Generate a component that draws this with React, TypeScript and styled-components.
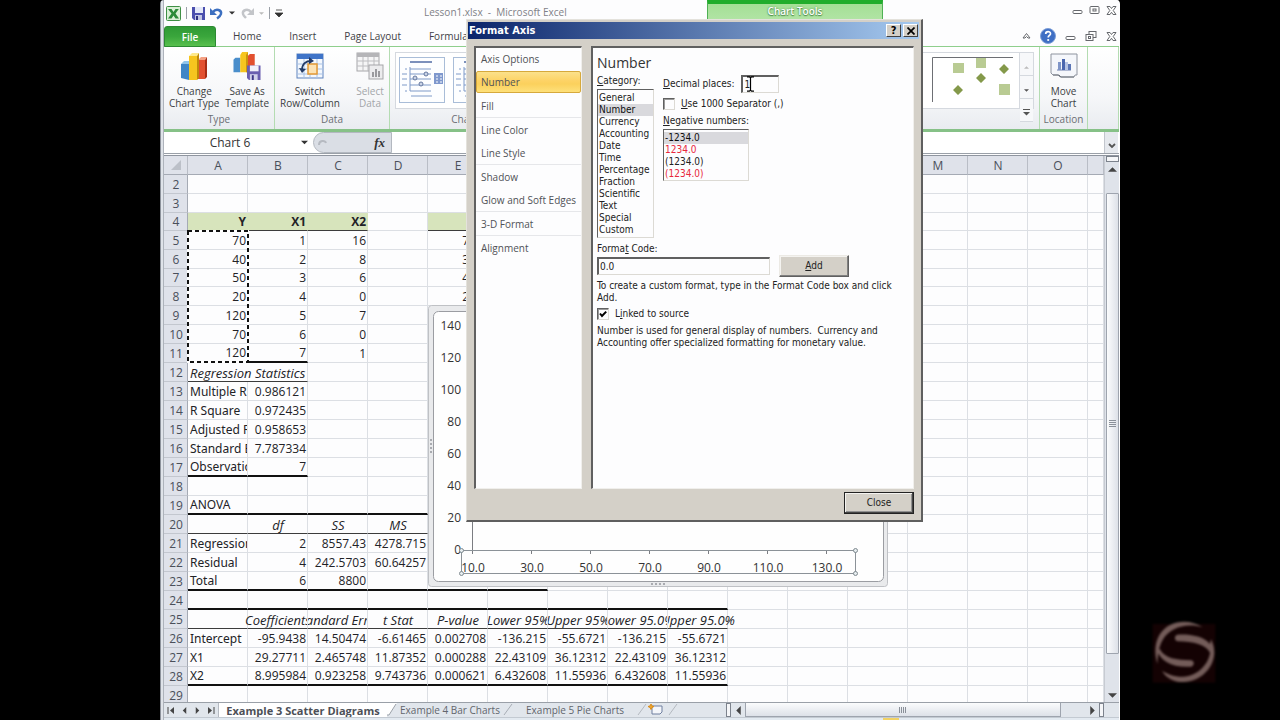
import React from 'react';
import styled, { createGlobalStyle, css } from 'styled-components';

const uiFont = '"Open Sans", "Noto Sans", sans-serif';
const dialogFont = '"DejaVu Sans Condensed", "DejaVu Sans", sans-serif';

const GlobalStyle = createGlobalStyle`
  *, *::before, *::after { box-sizing: border-box; }
  body { margin: 0; background: #000; font-family: ${uiFont}; overflow: hidden; }
  button, input, select { font: inherit; color: inherit; margin: 0; }
`;

/* ---------- window frame ---------- */

const Stage = styled.div`
  position: relative;
  display: flex;
  justify-content: center;
  height: 100vh;
  background: #000;
`;

const ExcelWindow = styled.div`
  position: relative;
  display: flex;
  flex-direction: column;
  width: 75vw;
  height: 100%;
  padding: 0 1px 0 4px;
  background: linear-gradient(90deg, #8d929b 0 1px, #dfe3e9 1px 3px, #aeb3bb 3px 4px, #fdfdfe 4px);
  border-radius: 4px 4px 0 0;
  overflow: hidden;
`;

const TitleBar = styled.header`
  display: flex;
  height: 26px;
  flex: none;
  background: #fdfdfe;
`;

const QuickAccess = styled.div`
  display: flex;
  align-items: center;
  gap: 5px;
  width: 260px;
  padding-left: 2px;
`;

const IconButton = styled.button`
  display: flex;
  align-items: center;
  justify-content: center;
  padding: 0;
  border: 0;
  background: none;
`;

const BarDivider = styled.span`
  width: 1px;
  height: 12px;
  background: #9a9fa7;
`;

const WindowTitle = styled.div`
  width: 283px;
  font-size: 10px;
  line-height: 25px;
  color: #7f8187;
  white-space: nowrap;
`;

const ContextTab = styled.div`
  width: 176px;
  height: 26px;
  border-top: 4px solid #21ad2c;
  border-left: 1px solid #4fb054;
  border-right: 1px solid #4fb054;
  background: linear-gradient(#a4df96, #b6e6aa);
  color: #fff;
  font-size: 10px;
  font-weight: 600;
  line-height: 15px;
  text-align: center;
  text-shadow: 0 1px 1px #4d8a4b, 0 0 2px #4d8a4b;
`;

const ControlRow = styled.div<{ $gap: number }>`
  display: flex;
  align-items: center;
  gap: ${p => p.$gap}px;
  height: 20px;
  margin-left: auto;
  padding-right: 2px;
`;

const RibbonTabs = styled.nav`
  display: flex;
  flex: none;
  height: 21px;
  background: #fdfdfe;
  border-bottom: 1px solid #8fcf8d;
`;

const FileTab = styled.a`
  width: 52px;
  height: 21px;
  margin-right: 3px;
  border: 1px solid #2c8a32;
  border-radius: 3px 3px 0 0;
  background: linear-gradient(#2f9a35, #3aa63c 50%, #58c04e);
  color: #fff;
  font-size: 10px;
  font-weight: 600;
  line-height: 20px;
  text-align: center;
  text-decoration: none;
`;

const RibbonTab = styled.button`
  padding: 0 14px;
  border: 0;
  background: none;
  color: #3f4146;
  font-size: 10px;
  line-height: 21px;
  white-space: nowrap;
`;

const Ribbon = styled.section`
  display: flex;
  flex: none;
  height: 85px;
  background: linear-gradient(#ffffff, #f6f7f9 60%, #e9ecf0);
  border-bottom: 3px solid #86c187;
`;

const Group = styled.div<{ $width?: number }>`
  display: flex;
  flex-direction: column;
  flex: ${p => (p.$width ? 'none' : '1')};
  width: ${p => (p.$width ? p.$width + 'px' : 'auto')};
  min-width: 0;
  border-right: 1px solid #b4dcb2;
`;

const GroupBody = styled.div<{ $align?: string }>`
  display: flex;
  flex: 1;
  gap: 3px;
  padding: 5px 5px 0;
  justify-content: ${p => p.$align || 'space-between'};
`;

const GroupLabel = styled.div`
  height: 18px;
  font-size: 10px;
  line-height: 17px;
  text-align: center;
  color: #6b6e74;
`;

const BigButton = styled.button<{ $disabled?: boolean }>`
  display: flex;
  flex-direction: column;
  align-items: center;
  gap: 5px;
  padding: 0;
  border: 0;
  background: none;
  font-size: 10px;
  line-height: 12px;
  white-space: nowrap;
  color: ${p => (p.$disabled ? '#a3a5a9' : '#3b3d42')};
  span { display: block; }
`;

const Gallery = styled.div`
  display: flex;
  height: 57px;
  padding: 4px 3px;
  gap: 8px;
  border: 1px solid #d5d9df;
  background: #fff;
`;

const GalleryScroll = styled.div`
  display: flex;
  flex-direction: column;
  width: 14px;
  margin: -4px -3px;
  border-left: 1px solid #d5d9df;
  button { flex: 1; border: 0; border-bottom: 1px solid #d5d9df; background: #f7f8fa; padding: 0; }
`;

/* ---------- formula bar ---------- */

const FormulaBar = styled.div`
  display: flex;
  flex: none;
  height: 22px;
  background: #fff;
  border-bottom: 1px solid #9aa0a8;
`;

const NameBox = styled.input`
  width: 132px;
  border: 0;
  padding: 0;
  background: none;
  text-align: center;
  font-size: 12px;
  line-height: 18px;
  color: #333;
`;

const NameList = styled(IconButton)`
  width: 17px;
`;

const FxPill = styled.div`
  display: flex;
  align-items: center;
  justify-content: space-between;
  width: 79px;
  padding: 0 6px 0 4px;
  border: 1px solid #b3b8c0;
  border-radius: 11px 0 0 11px;
  background: #dadee5;
  font: italic bold 13px "Liberation Serif", serif;
  color: #333;
`;

const FormulaInput = styled.input`
  flex: 1;
  min-width: 0;
  border: 0;
  background: none;
`;

const Expand = styled.button`
  width: 14px;
  margin-right: 1px;
  padding: 0;
  border: 0;
  border-left: 1px solid #c2c6cd;
  background: #e6e9ee;
`;

/* ---------- sheet ---------- */

const SheetArea = styled.main`
  display: flex;
  flex: 1;
  min-height: 0;
  margin-top: 1px;
  border-top: 1px solid #8f959f;
`;

const Sheet = styled.div`
  position: relative;
  flex: 1;
  min-width: 0;
  overflow: hidden;
  background: #fdfdfe;
`;

const Grid = styled.table`
  width: 100%;
  table-layout: fixed;
  border-collapse: separate;
  border-spacing: 0;
  font-size: 12px;
  line-height: 16px;
  color: #222226;
  td { padding: 0; white-space: nowrap; }
  th { padding: 1px 0 0 1px; white-space: nowrap; }
`;

const Col = styled.col<{ $w?: number }>`
  width: ${p => (p.$w ? p.$w + 'px' : 'auto')};
`;

const ColHead = styled.th`
  height: 19px;
  border-right: 1px solid #b9bdc6;
  border-bottom: 1px solid #a5aab4;
  background: #dfe2ea;
  color: #4a4f5a;
  font-weight: 400;
`;

const Row = styled.tr<{ $short?: boolean }>`
  height: ${p => (p.$short ? '18px' : '19px')};
`;

const RowHead = styled.th`
  border-right: 1px solid #a5aab4;
  border-bottom: 1px solid #c3c7cf;
  background: #dfe2ea;
  color: #4a4f5a;
  font-weight: 400;
`;

type Line = 'thin' | 'thick' | undefined;
type Kind = 'text' | 'num' | 'bold' | 'head' | 'title';

const Cell = styled.td<{ $green?: boolean; $line?: Line }>`
  height: inherit;
  border-right: 1px solid ${p => (p.$green ? '#d7e4bc' : '#dcdfe4')};
  border-bottom: 1px solid #dcdfe4;
  background: ${p => (p.$green ? '#d7e4bc' : 'transparent')};
  ${p => p.$line === 'thin' && css`border-bottom: 1px solid #3c3c3c;`}
  ${p => p.$line === 'thick' && css`border-bottom: 2px solid #111;`}
`;

const justify: Record<Kind, string> = {
  text: 'flex-start', title: 'flex-start', num: 'flex-end', bold: 'flex-end', head: 'center',
};

const Value = styled.div<{ $kind: Kind; $spill?: 'left' | 'right' }>`
  display: flex;
  height: 17px;
  padding: 1px 1px 0 2px;
  justify-content: ${p => justify[p.$kind]};
  font-size: ${p => (p.$kind === 'head' || p.$kind === 'title' ? '13px' : '12px')};
  font-weight: ${p => (p.$kind === 'bold' ? 700 : 400)};
  font-style: ${p => (p.$kind === 'head' || p.$kind === 'title' ? 'italic' : 'normal')};
  font-family: ${p => (p.$kind === 'text' ? '"Noto Sans", sans-serif' : 'inherit')};
  overflow: ${p => (p.$spill ? 'visible' : 'hidden')};
  ${p => p.$spill === 'left' && css`clip-path: inset(0 0 0 -30px);`}
  ${p => p.$spill === 'right' && css`clip-path: inset(0 -30px 0 0);`}
`;

const Marquee = styled.svg`
  position: absolute;
  left: 23px;
  top: 74px;
`;

const ChartFrame = styled.svg`
  position: absolute;
  left: 264px;
  top: 149px;
  font-family: ${uiFont};
  font-size: 12px;
`;

const VScroll = styled.div`
  display: flex;
  flex-direction: column;
  align-items: center;
  width: 15px;
  background: #dfe3ea;
  border-left: 1px solid #c7cbd2;
`;

const SplitBox = styled.div`
  width: 13px;
  height: 6px;
  border: 1px solid #7c828c;
  background: #f5f6f8;
`;

const VTrack = styled.div`
  display: flex;
  flex: 1;
  padding: 17px 0 34px;
`;

const VThumb = styled.div`
  display: flex;
  align-items: center;
  justify-content: center;
  width: 13px;
  border: 1px solid #9ea4ae;
  border-radius: 1px;
  background: linear-gradient(90deg, #fbfcfd, #dde1e8);
`;

const ScrollButton = styled.button`
  display: flex;
  align-items: center;
  justify-content: center;
  width: 14px;
  height: 14px;
  padding: 0;
  border: 0;
  background: none;
`;

/* ---------- bottom bar ---------- */

const BottomBar = styled.footer`
  display: flex;
  flex: none;
  height: 15px;
  background: #e1e6ec;
  border-top: 1px solid #9aa0a8;
`;

const SheetNav = styled.div`
  display: flex;
  align-items: center;
  justify-content: space-around;
  width: 55px;
  border-right: 1px solid #b5bac2;
`;

const SheetTab = styled.button<{ $active?: boolean; $w: number }>`
  width: ${p => p.$w}px;
  padding: 0;
  border: 0;
  background: ${p => (p.$active ? '#fff' : 'none')};
  color: ${p => (p.$active ? '#4c4f57' : '#62656d')};
  font-size: ${p => (p.$active ? '11px' : '10px')};
  font-weight: ${p => (p.$active ? 700 : 400)};
  line-height: 13px;
  white-space: nowrap;
`;

const HScroll = styled.div`
  display: flex;
  flex: 1;
  margin-left: 29px;
  padding-right: 15px;
`;

const HTrack = styled.div`
  display: flex;
  flex: 1;
  padding-right: 24px;
`;

const HThumb = styled.div`
  display: flex;
  align-items: center;
  justify-content: center;
  flex: 1;
  border: 1px solid #9ea4ae;
  border-top: 0;
  background: linear-gradient(#fbfcfd, #dde1e8);
`;

const SplitHandle = styled.div`
  width: 5px;
  border: 1px solid #7c828c;
  background: #f5f6f8;
`;

const StatusBar = styled.div`
  display: flex;
  flex: none;
  justify-content: flex-end;
  height: 3px;
  padding-right: 220px;
  background: #e3eaf1;
  border-top: 1px solid #c3cad2;
  span { width: 16px; background: #f2d264; }
`;

/* ---------- dialog ---------- */

const Dialog = styled.section`
  position: absolute;
  left: 306px;
  top: 19px;
  display: flex;
  flex-direction: column;
  width: 457px;
  height: 503px;
  padding: 2px 2px 0 1px;
  background: #d4d0c8;
  border: 1px solid #e4e2dc;
  border-right: 2px solid #5f5f5f;
  border-bottom: 2px solid #5f5f5f;
  font-family: ${dialogFont};
  font-size: 10px;
  line-height: 12px;
  color: #222;
`;

const DialogTitle = styled.div`
  display: flex;
  align-items: center;
  gap: 2px;
  height: 17px;
  padding: 0 1px;
  background: linear-gradient(90deg, #0a246a, #a6caf0);
  color: #fff;
  font-size: 11px;
  font-weight: 700;
  h1 { flex: 1; margin: 0; font: inherit; }
`;

const CaptionButton = styled.button`
  display: flex;
  align-items: center;
  justify-content: center;
  width: 15px;
  height: 13px;
  padding: 0;
  background: #d4d0c8;
  border: 1px solid;
  border-color: #fff #404040 #404040 #fff;
  color: #000;
  font-size: 11px;
  font-weight: 700;
  line-height: 11px;
`;

const DialogBody = styled.div`
  display: flex;
  gap: 9px;
  height: 443px;
  margin: 7px 5px 0 6px;
`;

const sunken = css`
  border: 1px solid;
  border-color: #606060 #dcdad4 #dcdad4 #606060;
  background: #fdfdfe;
`;

const panel = css`
  border: 1px solid;
  border-width: 2px 1px 1px 2px;
  border-color: #606060 #f0efec #f0efec #606060;
  background: #fdfdfe;
`;

const Nav = styled.nav`
  ${panel}
  flex: none;
  width: 108px;
  font-family: ${uiFont};
`;

const NavItem = styled.a<{ $active?: boolean; $rule?: boolean }>`
  display: block;
  padding-left: ${p => (p.$active ? '4px' : '5px')};
  font-size: 10px;
  line-height: ${p => (p.$active ? '20px' : '22px')};
  margin-bottom: 1px;
  color: #505257;
  text-decoration: none;
  white-space: nowrap;
  ${p => p.$rule && css`border-bottom: 1px solid #e6e7ea;`}
  ${p => p.$active && css`
    border: 1px solid #d6a93c;
    border-radius: 2px;
    margin-bottom: 2px;
    background: linear-gradient(#fbe18b, #fdd264 45%, #fbd15d 60%, #fee07a);
  `}
`;

const Pane = styled.div`
  ${panel}
  flex: 1;
  padding: 6px 4px 0;
`;

const PaneTitle = styled.h2`
  margin: 0 0 3px;
  font: 400 14px/18px ${uiFont};
  color: #333;
`;

const Columns = styled.div`
  display: flex;
  align-items: flex-start;
  gap: 9px;
`;

const Field = styled.div`
  display: flex;
  flex-direction: column;
  align-items: flex-start;
  label { display: block; }
`;

const ListBox = styled.select<{ $w: number; $h: number }>`
  ${sunken}
  width: ${p => p.$w}px;
  height: ${p => p.$h}px;
  margin-top: 2px;
  padding: 2px 0 0;
  border-radius: 0;
  overflow: hidden;
  outline: 0;
  scrollbar-width: none;
  option { min-height: 12px; height: 12px; padding: 0 1px; line-height: 12px; }
  option:checked { background: linear-gradient(#d9d9dd, #d9d9dd); }
`;

const RedOption = styled.option`
  color: #e8283c;
`;

const Inline = styled.div<{ $gap: number; $h: number }>`
  display: flex;
  align-items: center;
  gap: ${p => p.$gap}px;
  height: ${p => p.$h}px;
`;

const TextBox = styled.input<{ $w: number }>`
  ${sunken}
  border-top-width: 2px;
  border-left-width: 2px;
  width: ${p => p.$w}px;
  height: 18px;
  padding: 0 1px;
  outline: 0;
`;

const CaretWrap = styled.div`
  position: relative;
  display: flex;
  svg { position: absolute; left: 5px; top: 1px; }
`;

const Check = styled.input`
  ${sunken}
  appearance: none;
  display: block;
  width: 12px;
  height: 12px;
  box-shadow: inset 1px 1px 0 #9a9a9a;
  &:checked {
    background: #fdfdfe
      url("data:image/svg+xml,%3Csvg xmlns='http://www.w3.org/2000/svg' viewBox='0 0 10 10'%3E%3Cpath d='M2 4.5L4 7L8.2 2.6' fill='none' stroke='black' stroke-width='2'/%3E%3C/svg%3E")
      center / 10px 10px no-repeat;
  }
`;

const PushButton = styled.button<{ $default?: boolean }>`
  width: 70px;
  height: 22px;
  padding: 0;
  background: #d4d0c8;
  border: 1px solid;
  border-color: ${p => (p.$default ? '#222' : '#eceae5 #606060 #606060 #eceae5')};
  box-shadow: ${p => (p.$default
    ? 'inset -1px -1px 0 #444, inset 1px 1px 0 #f4f3f0, inset -2px -2px 0 #909090'
    : 'inset -1px -1px 0 #808080, inset 1px 1px 0 #f4f3f0')};
`;

const Note = styled.p<{ $top: number }>`
  margin: ${p => p.$top}px 0 0;
`;

const DialogFooter = styled.div`
  display: flex;
  justify-content: flex-end;
  padding: 3px 5px 0;
`;

const Watermark = styled.svg`
  position: absolute;
  right: 40px;
  bottom: 20px;
  filter: blur(1px);
`;

/* ---------- icons ---------- */

const Tri = ({ dir = 'down', c = '#333', s = 7 }: { dir?: string; c?: string; s?: number }) => {
  const d: Record<string, string> = { down: 'M0 2h8L4 6z', up: 'M0 6h8L4 2z', left: 'M6 0v8L2 4z', right: 'M2 0v8l4-4z' };
  return <svg width={s} height={s} viewBox="0 0 8 8"><path d={d[dir]} fill={c} /></svg>;
};

const Floppy = () => (
  <svg width="13" height="13" viewBox="0 0 13 13">
    <path d="M0 0h13v13H2l-2-2z" fill="#4b4fae" />
    <rect x="3" y="0" width="8" height="6" fill="#e4e8f8" />
    <rect x="3" y="8" width="7" height="5" fill="#c3c6e4" />
    <rect x="4" y="9" width="2" height="4" fill="#2d3080" />
  </svg>
);

const Bars = () => (
  <svg width="28" height="28" viewBox="0 0 28 28">
    <path d="M1 12v14l8 2V12z" fill="#3f86c6" /><path d="M1 12l3-3h7l-2 3z" fill="#8fc4ea" /><path d="M9 12l2-3v17l-2 2z" fill="#225a94" />
    <path d="M18 8v19h7V8z" fill="#e2502f" /><path d="M18 8l3-3h6l-2 3z" fill="#f4a184" /><path d="M25 8l2-3v20l-2 2z" fill="#a62c14" />
    <path d="M9 4v24h8V4z" fill="#f6c51f" /><path d="M9 4l3-3h7l-2 3z" fill="#fde98b" /><path d="M17 4l2-3v25l-2 2z" fill="#bf8a0a" />
  </svg>
);

const TemplateIcon = () => (
  <svg width="30" height="28" viewBox="0 0 30 29">
    <path d="M1 8l2-2h5v15H1z" fill="#4a8ecb" /><path d="M16 4l2-2h5v15h-7z" fill="#e2502f" />
    <path d="M8 3l2-3h6v21H8z" fill="#f6c51f" /><path d="M14 3l2-3v21h-2z" fill="#c8930f" />
    <path d="M15 14h14v15H17l-2-2z" fill="#6a5fb0" /><rect x="18" y="14" width="9" height="6" fill="#f1f1fa" />
    <rect x="18" y="23" width="8" height="6" fill="#d2d2ea" /><rect x="20" y="24" width="2" height="5" fill="#3d3787" />
  </svg>
);

const SwitchIcon = () => (
  <svg width="28" height="28" viewBox="0 0 28 28">
    <rect x="1" y="2" width="26" height="24" fill="#f4f8fd" stroke="#5f83bd" />
    <rect x="1" y="2" width="26" height="5" fill="#3f74c8" />
    <path d="M1 12h26M1 17h26M1 22h26M8 7v19M14 7v19M21 7v19" stroke="#a9c2e6" />
    <path d="M12 12h9v10h-9z" fill="#fce3b5" stroke="#e59b35" strokeWidth="1.5" />
    <path d="M6 18C6 12 10 9 15 9" fill="none" stroke="#233a66" strokeWidth="1.8" />
    <path d="M13 5l5 4-5 3zM3 16l3 5 4-4z" fill="#233a66" />
  </svg>
);

const SelectDataIcon = () => (
  <svg width="28" height="28" viewBox="0 0 28 28">
    <rect x="1" y="1" width="22" height="18" fill="#f5f5f6" stroke="#a6a6a9" />
    <rect x="1" y="1" width="22" height="4" fill="#b5b5b8" />
    <path d="M1 9h22M1 14h22M7 5v14M12 5v14M18 5v14" stroke="#bdbdc0" />
    <rect x="13" y="13" width="14" height="14" fill="#ececee" stroke="#a6a6a9" />
    <path d="M17 25v-5M20 25v-8M23 25v-6" stroke="#9a9a9e" strokeWidth="2" />
  </svg>
);

const MoveIcon = () => (
  <svg width="28" height="28" viewBox="0 0 28 28">
    <path d="M1 2h26v21h-2l-1 2H10l-2-2H3l-2-2z" fill="#f5f7fb" stroke="#8e949f" />
    <path d="M3 23h6l2 2h13" fill="none" stroke="#70767f" />
    <path d="M7 18h14" stroke="#6c7fae" />
    <rect x="8" y="10" width="3" height="8" fill="#8096c8" /><rect x="12" y="7" width="3" height="11" fill="#4a66ae" />
    <rect x="15" y="10" width="3" height="8" fill="#b7c4e3" /><rect x="18" y="12" width="3" height="6" fill="#5c76b6" />
  </svg>
);

const LayoutThumb = () => (
  <svg width="46" height="46" viewBox="0 0 46 46">
    <rect x=".5" y=".5" width="45" height="45" fill="#fdfeff" stroke="#a9bdd8" />
    <path d="M11 5h22" stroke="#7c90bb" strokeWidth="2" />
    <path d="M11 10v24M11 12h21M11 17h21M11 22h21M11 28h21M11 34h21" stroke="#7e9ac8" />
    <path d="M3 17h5M3 22h5M3 28h5M6 12h2M6 34h2M12 39h21" stroke="#7e9ac8" />
    <g fill="#c9d3e6" stroke="#64789f"><circle cx="16" cy="21" r="2" /><circle cx="27" cy="17" r="2" /><circle cx="22" cy="27" r="2" /></g>
    <rect x="35" y="16" width="9" height="11" fill="#7f98cd" /><path d="M37 19h2M37 22h2M37 25h2M41 19h2M41 22h2M41 25h2" stroke="#fff" />
  </svg>
);

const StyleThumb = () => (
  <svg width="82" height="46" viewBox="0 0 82 46">
    <path d="M.5 45V.5H81" fill="none" stroke="#6d6f74" />
    <g fill="#b9cb93"><rect x="21" y="6" width="11" height="10" /><rect x="44" y="1" width="10" height="10" /><rect x="67" y="27" width="11" height="11" /></g>
    <g fill="#84994a"><path d="M26 28l5 5-5 5-5-5zM49 16l5 5-5 5-5-5zM72 7l5 5-5 5-5-5z" /></g>
  </svg>
);

const PrevStyleThumb = () => (
  <svg width="82" height="46" viewBox="0 0 82 46">
    <path d="M.5 45V.5H81" fill="none" stroke="#6d6f74" />
    <g fill="#d98f8f"><rect x="21" y="6" width="11" height="10" /><rect x="44" y="1" width="10" height="10" /><rect x="67" y="27" width="11" height="11" /></g>
    <g fill="#5e3236"><path d="M26 28l5 5-5 5-5-5zM49 16l5 5-5 5-5-5zM72 7l5 5-5 5-5-5z" /></g>
  </svg>
);

const MinIcon = () => <svg width="11" height="11" viewBox="0 0 11 11"><rect x="1" y="5.5" width="9" height="3" rx="1" fill="#fff" stroke="#66686d" /></svg>;
const MaxIcon = () => <svg width="11" height="11" viewBox="0 0 11 11"><rect x="1" y="1.5" width="9" height="7" rx="1" fill="#fff" stroke="#66686d" /><rect x="4" y="4" width="3" height="2" fill="none" stroke="#66686d" /></svg>;
const RestoreIcon = () => <svg width="12" height="12" viewBox="0 0 12 12"><rect x="4" y="1.5" width="7" height="6" fill="#fff" stroke="#66686d" /><rect x="1" y="4.5" width="7" height="6" fill="#fff" stroke="#66686d" /><rect x="3.5" y="6.5" width="2" height="2" fill="none" stroke="#66686d" /></svg>;
const XIcon = () => <svg width="11" height="11" viewBox="0 0 11 11"><path d="M1 1.500h3l1.500 2 1.500-2h3L7.200 5.500 10 9.500H7L5.500 7.300 4 9.500H1l2.800-4z" fill="#fff" stroke="#66686d" /></svg>;

/* ---------- sheet data ---------- */

type Spill = 'left' | 'right';
type CellData = { c: string; v?: string; k?: Kind; green?: boolean; line?: Line; spill?: Spill; span?: number };

const columns = 'ABCDEFGHIJKLMNO'.split('');
const green = (c: string, v?: string): CellData => ({ c, v, k: 'bold', green: true, line: 'thin' });
const num = (c: string, v: string, line?: Line): CellData => ({ c, v, k: 'num', line });
const txt = (c: string, v: string, line?: Line): CellData => ({ c, v, k: 'text', line });
const head = (c: string, v: string, spill?: Spill): CellData => ({ c, v, k: 'head', line: 'thin', spill });
const lines = (from: string, to: string, line: Line): CellData[] =>
  columns.filter(c => c >= from && c <= to).map(c => ({ c, line }));
const nums = (vals: string[], line?: Line) => vals.map((v, i) => num(columns[i + 1], v, line));

const sheet: Record<number, CellData[]> = {
  2: [], 3: [],
  4: [green('A', 'Y'), green('B', 'X1'), green('C', 'X2'), green('E'), green('F')],
  5: [num('A', '70'), num('B', '1'), num('C', '16'), num('E', '70.0')],
  6: [num('A', '40'), num('B', '2'), num('C', '8'), num('E', '30.0')],
  7: [num('A', '50'), num('B', '3'), num('C', '6'), num('E', '40.0')],
  8: [num('A', '20'), num('B', '4'), num('C', '0'), num('E', '20.0')],
  9: [num('A', '120'), num('B', '5'), num('C', '7')],
  10: [num('A', '70'), num('B', '6'), num('C', '0')],
  11: [num('A', '120', 'thick'), num('B', '7', 'thick'), num('C', '1')],
  12: [{ c: 'A', v: 'Regression Statistics', k: 'title', line: 'thin', span: 2 }],
  13: [txt('A', 'Multiple R'), num('B', '0.986121')],
  14: [txt('A', 'R Square'), num('B', '0.972435')],
  15: [txt('A', 'Adjusted R Square'), num('B', '0.958653')],
  16: [txt('A', 'Standard Error'), num('B', '7.787334')],
  17: [txt('A', 'Observations', 'thick'), num('B', '7', 'thick')],
  18: [],
  19: [txt('A', 'ANOVA', 'thick'), ...lines('B', 'F', 'thick')],
  20: [{ c: 'A', line: 'thin' }, head('B', 'df'), head('C', 'SS'), head('D', 'MS'), ...lines('E', 'F', 'thin')],
  21: [txt('A', 'Regression'), ...nums(['2', '8557.43', '4278.715'])],
  22: [txt('A', 'Residual'), ...nums(['4', '242.5703', '60.64257'])],
  23: [txt('A', 'Total', 'thick'), ...nums(['6', '8800'], 'thick'), ...lines('D', 'F', 'thick')],
  24: lines('A', 'I', 'thick'),
  25: [
    { c: 'A', line: 'thin' }, head('B', 'Coefficients', 'left'), head('C', 'Standard Error'), head('D', 't Stat'),
    head('E', 'P-value'), head('F', 'Lower 95%'), head('G', 'Upper 95%'), head('H', 'Lower 95.0%'), head('I', 'Upper 95.0%', 'right'),
  ],
  26: [txt('A', 'Intercept'), ...nums(['-95.9438', '14.50474', '-6.61465', '0.002708', '-136.215', '-55.6721', '-136.215', '-55.6721'])],
  27: [txt('A', 'X1'), ...nums(['29.27711', '2.465748', '11.87352', '0.000288', '22.43109', '36.12312', '22.43109', '36.12312'])],
  28: [txt('A', 'X2', 'thick'), ...nums(['8.995984', '0.923258', '9.743736', '0.000621', '6.432608', '11.55936', '6.432608', '11.55936'], 'thick')],
  29: [],
};
const shortRows = [4, 7];

function SheetRow({ n, data }: { n: number; data: CellData[] }) {
  const cells: React.ReactNode[] = [];
  for (let i = 0; i < columns.length; i++) {
    const d = data.find(x => x.c === columns[i]);
    cells.push(
      <Cell key={columns[i]} colSpan={d?.span} $green={d?.green} $line={d?.line}>
        {d?.v && <Value $kind={d.k || 'text'} $spill={d.spill}>{d.v}</Value>}
      </Cell>,
    );
    if (d?.span) i += d.span - 1;
  }
  return (
    <Row $short={shortRows.includes(n)}>
      <RowHead scope="row">{n}</RowHead>
      {cells}
      <Cell />
    </Row>
  );
}

function Chart() {
  const yTicks = [140, 120, 100, 80, 60, 40, 20, 0];
  const xTicks = ['10.0', '30.0', '50.0', '70.0', '90.0', '110.0', '130.0'];
  return (
    <ChartFrame width="460" height="282" viewBox="0 0 460 282">
      <rect x=".5" y=".5" width="459" height="281" rx="3" fill="#e9eaec" stroke="#bfc1c5" />
      <rect x="5.500" y="6.500" width="450" height="270" rx="5" fill="#fefefe" stroke="#9b9da2" />
      <g fill="#a9abb0">
        {[0, 4, 8, 12].map(o => <rect key={o} x={223 + o} y="278" width="2" height="2" />)}
        {[0, 4, 8, 12].map(o => <rect key={o} x="2" y={134 + o} width="2" height="2" />)}
      </g>
      <g fill="#333" textAnchor="end">
        {yTicks.map((t, i) => <text key={t} x="33" y={25 + i * 32}>{t}</text>)}
      </g>
      <path d="M44.500 20v229" stroke="#7b7d82" />
      <path d="M44 245.500h383" stroke="#7b7d82" />
      <path d={xTicks.map((_, i) => `M${44.5 + i * 59} 245v4`).join('')} stroke="#7b7d82" />
      <rect x="33.500" y="245.500" width="394" height="23" fill="none" stroke="#8b9298" />
      <g fill="#333" textAnchor="middle">
        {xTicks.map((t, i) => <text key={t} x={45 + i * 59} y="267">{t}</text>)}
      </g>
      <g fill="#e8eef0" stroke="#7f8a90">
        <circle cx="33.500" cy="245.500" r="2" /><circle cx="427.500" cy="245.500" r="2" />
        <circle cx="33.500" cy="268.500" r="2" /><circle cx="427.500" cy="268.500" r="2" />
      </g>
    </ChartFrame>
  );
}

function FormatAxisDialog() {
  return (
    <Dialog role="dialog" aria-label="Format Axis">
      <DialogTitle>
        <h1>Format Axis</h1>
        <CaptionButton>?</CaptionButton>
        <CaptionButton aria-label="Close dialog">
          <svg width="8" height="8" viewBox="0 0 8 8"><path d="M.5 .5l7 7M7.500 .5l-7 7" stroke="#000" strokeWidth="1.700" /></svg>
        </CaptionButton>
      </DialogTitle>
      <DialogBody>
        <Nav>
          <NavItem href="#options">Axis Options</NavItem>
          <NavItem href="#number" $active>Number</NavItem>
          <NavItem href="#fill" $rule>Fill</NavItem>
          <NavItem href="#line-color">Line Color</NavItem>
          <NavItem href="#line-style" $rule>Line Style</NavItem>
          <NavItem href="#shadow">Shadow</NavItem>
          <NavItem href="#glow" $rule>Glow and Soft Edges</NavItem>
          <NavItem href="#format-3d" $rule>3-D Format</NavItem>
          <NavItem href="#alignment">Alignment</NavItem>
        </Nav>
        <Pane>
          <PaneTitle>Number</PaneTitle>
          <Columns>
            <Field>
              <label htmlFor="category"><u>C</u>ategory:</label>
              <ListBox id="category" size={12} defaultValue="Number" $w={57} $h={149}>
                {['General', 'Number', 'Currency', 'Accounting', 'Date', 'Time', 'Percentage', 'Fraction', 'Scientific', 'Text', 'Special', 'Custom'].map(o => (
                  <option key={o}>{o}</option>
                ))}
              </ListBox>
            </Field>
            <Field>
              <Inline $gap={7} $h={18}>
                <label htmlFor="places"><u>D</u>ecimal places:</label>
                <CaretWrap>
                  <TextBox id="places" $w={38} defaultValue="1" />
                  <svg width="9" height="16" viewBox="0 0 9 16"><path d="M1 .8h2.500l1 1 1-1H8M4.500 1.500v13M1 15.200h2.500l1-1 1 1H8" fill="none" stroke="#000" strokeWidth="1.200" /></svg>
                </CaretWrap>
              </Inline>
              <Inline $gap={6} $h={22}>
                <Check type="checkbox" id="sep" />
                <label htmlFor="sep"><u>U</u>se 1000 Separator (,)</label>
              </Inline>
              <label htmlFor="negative"><u>N</u>egative numbers:</label>
              <ListBox id="negative" size={4} defaultValue="a" $w={86} $h={52}>
                <option value="a">-1234.0</option>
                <RedOption value="b">1234.0</RedOption>
                <option value="c">(1234.0)</option>
                <RedOption value="d">(1234.0)</RedOption>
              </ListBox>
            </Field>
          </Columns>
          <Note as="div" $top={5}><label htmlFor="code">Forma<u>t</u> Code:</label></Note>
          <Inline $gap={9} $h={22}>
            <TextBox id="code" $w={173} defaultValue="0.0" />
            <PushButton><u>A</u>dd</PushButton>
          </Inline>
          <Note $top={3}>To create a custom format, type in the Format Code box and click Add.</Note>
          <Inline $gap={6} $h={20}>
            <Check type="checkbox" id="linked" defaultChecked />
            <label htmlFor="linked">L<u>i</u>nked to source</label>
          </Inline>
          <Note $top={1}>Number is used for general display of numbers.&nbsp; Currency and Accounting offer specialized formatting for monetary value.</Note>
        </Pane>
      </DialogBody>
      <DialogFooter><PushButton $default>Close</PushButton></DialogFooter>
    </Dialog>
  );
}

export default function App() {
  return (
    <>
      <GlobalStyle />
      <Stage>
        <ExcelWindow>
          <TitleBar>
            <QuickAccess>
              <svg width="15" height="15" viewBox="0 0 15 15">
                <rect x=".5" y=".5" width="14" height="14" rx="1" fill="#d9efd5" stroke="#3f8f45" />
                <path d="M2 3h3.500l2 3 2-3h3.300L9.500 7.500 13 12.500H9.500L7.500 9.500 5.500 12.500H2L5.500 7.500z" fill="#2b8a38" />
              </svg>
              <BarDivider />
              <IconButton aria-label="Save"><Floppy /></IconButton>
              <IconButton aria-label="Undo">
                <svg width="14" height="13" viewBox="0 0 14 13"><path d="M3 5c3-4 9-2 8 2-.5 2-2 3-4 4.500" fill="none" stroke="#3c6fc0" strokeWidth="2.400" /><path d="M0 1v7h7z" fill="#3c6fc0" /></svg>
              </IconButton>
              <Tri s={6} />
              <IconButton aria-label="Redo">
                <svg width="14" height="13" viewBox="0 0 14 13"><path d="M11 5C8 1 2 3 3 7c.5 2 2 3 3 4" fill="none" stroke="#c3c5c9" strokeWidth="2.400" /><path d="M14 1v7H7z" fill="#c3c5c9" /></svg>
              </IconButton>
              <Tri s={5} c="#bbb" />
              <BarDivider />
              <svg width="8" height="8" viewBox="0 0 8 8"><path d="M1 1h6M0 4h8L4 8z" stroke="#333" fill="#333" strokeWidth=".8" /></svg>
            </QuickAccess>
            <WindowTitle>Lesson1.xlsx&nbsp; - &nbsp;Microsoft Excel</WindowTitle>
            <ContextTab>Chart Tools</ContextTab>
            <ControlRow $gap={6}>
              <IconButton aria-label="Minimize"><MinIcon /></IconButton>
              <IconButton aria-label="Maximize"><MaxIcon /></IconButton>
              <IconButton aria-label="Close"><XIcon /></IconButton>
            </ControlRow>
          </TitleBar>

          <RibbonTabs>
            <FileTab href="#file">File</FileTab>
            <RibbonTab>Home</RibbonTab>
            <RibbonTab>Insert</RibbonTab>
            <RibbonTab>Page Layout</RibbonTab>
            <RibbonTab>Formulas</RibbonTab>
            <ControlRow $gap={9}>
              <svg width="9" height="8" viewBox="0 0 9 8"><path d="M1 6L4.500 1.500 8 6H6L4.500 4.500 3 6z" fill="#fff" stroke="#66686d" /></svg>
              <svg width="16" height="16" viewBox="0 0 16 16">
                <circle cx="8" cy="8" r="7.500" fill="#3f6fc4" stroke="#7e9fd8" />
                <path d="M5.700 6c0-3 4.800-3 4.800-.3 0 1.700-2.300 1.800-2.300 3.800" fill="none" stroke="#fff" strokeWidth="1.700" /><circle cx="8.200" cy="12" r="1.100" fill="#fff" />
              </svg>
              <IconButton aria-label="Minimize workbook"><MinIcon /></IconButton>
              <IconButton aria-label="Restore workbook"><RestoreIcon /></IconButton>
              <IconButton aria-label="Close workbook"><XIcon /></IconButton>
            </ControlRow>
          </RibbonTabs>

          <Ribbon>
            <Group $width={111}>
              <GroupBody>
                <BigButton><Bars /><span>Change<br />Chart Type</span></BigButton>
                <BigButton><TemplateIcon /><span>Save As<br />Template</span></BigButton>
              </GroupBody>
              <GroupLabel>Type</GroupLabel>
            </Group>
            <Group $width={115}>
              <GroupBody>
                <BigButton><SwitchIcon /><span>Switch<br />Row/Column</span></BigButton>
                <BigButton $disabled><SelectDataIcon /><span>Select<br />Data</span></BigButton>
              </GroupBody>
              <GroupLabel>Data</GroupLabel>
            </Group>
            <Group $width={188}>
              <GroupBody $align="flex-start">
                <Gallery><LayoutThumb /><LayoutThumb /></Gallery>
              </GroupBody>
              <GroupLabel>Chart Layouts</GroupLabel>
            </Group>
            <Group>
              <GroupBody $align="flex-end">
                <Gallery>
                  <PrevStyleThumb />
                  <StyleThumb />
                  <GalleryScroll>
                    <button aria-label="Scroll up"><Tri dir="up" s={5} c="#bbb" /></button>
                    <button aria-label="Scroll down"><Tri s={5} c="#555" /></button>
                    <button aria-label="More"><svg width="7" height="7" viewBox="0 0 7 7"><path d="M0 .5h7" stroke="#555" /><path d="M0 3h7L3.500 6.500z" fill="#555" /></svg></button>
                  </GalleryScroll>
                </Gallery>
              </GroupBody>
              <GroupLabel>Chart Styles</GroupLabel>
            </Group>
            <Group $width={48}>
              <GroupBody $align="center">
                <BigButton><MoveIcon /><span>Move<br />Chart</span></BigButton>
              </GroupBody>
              <GroupLabel>Location</GroupLabel>
            </Group>
            <Group $width={31} />
          </Ribbon>

          <FormulaBar>
            <NameBox aria-label="Name box" defaultValue="Chart 6" />
            <NameList aria-label="Name list"><Tri s={7} /></NameList>
            <FxPill>
              <svg width="9" height="8" viewBox="0 0 9 8"><path d="M1 6c0-5 6-5 7-2" fill="none" stroke="#b6bac1" strokeWidth="2" /></svg>
              <span>fx</span>
            </FxPill>
            <FormulaInput aria-label="Formula" />
            <Expand aria-label="Expand formula bar">
              <svg width="8" height="6" viewBox="0 0 8 6"><path d="M1 1l3 3 3-3" fill="none" stroke="#555" strokeWidth="1.800" /></svg>
            </Expand>
          </FormulaBar>

          <SheetArea>
            <Sheet>
              <Grid>
                <colgroup>
                  <Col $w={24} />
                  {columns.map(c => <Col key={c} $w={60} />)}
                  <Col />
                </colgroup>
                <thead>
                  <tr>
                    <ColHead>
                      <svg width="10" height="10" viewBox="0 0 10 10"><path d="M10 0v10H0z" fill="#bcc0c8" /></svg>
                    </ColHead>
                    {columns.map(c => <ColHead key={c} scope="col">{c}</ColHead>)}
                    <ColHead />
                  </tr>
                </thead>
                <tbody>
                  {Object.keys(sheet).map(n => <SheetRow key={n} n={+n} data={sheet[+n]} />)}
                </tbody>
              </Grid>
              <Marquee width="62" height="133" viewBox="0 0 62 133">
                <rect x="1" y="1" width="60" height="131" fill="none" stroke="#fff" strokeWidth="2" />
                <rect x="1" y="1" width="60" height="131" fill="none" stroke="#111" strokeWidth="2" strokeDasharray="4 3" />
              </Marquee>
              <Chart />
            </Sheet>
            <VScroll>
              <SplitBox />
              <ScrollButton aria-label="Scroll up"><Tri dir="up" s={9} c="#444" /></ScrollButton>
              <VTrack>
                <VThumb><svg width="7" height="8" viewBox="0 0 7 8"><path d="M0 .5h7M0 2.500h7M0 4.500h7M0 6.500h7" stroke="#8a9099" /></svg></VThumb>
              </VTrack>
              <ScrollButton aria-label="Scroll down"><Tri s={9} c="#444" /></ScrollButton>
            </VScroll>
          </SheetArea>

          <BottomBar>
            <SheetNav>
              <svg width="8" height="7" viewBox="0 0 8 7"><path d="M1 0v7" stroke="#444" /><path d="M7 0v7L3 3.500z" fill="#444" /></svg>
              <Tri dir="left" c="#444" /><Tri dir="right" c="#444" />
              <svg width="8" height="7" viewBox="0 0 8 7"><path d="M7 0v7" stroke="#444" /><path d="M1 0v7l4-3.500z" fill="#444" /></svg>
            </SheetNav>
            <SheetTab $active $w={168}>Example 3 Scatter Diagrams</SheetTab>
            <svg width="10" height="13" viewBox="0 0 10 13"><path d="M0 0h10L2 12H0z" fill="#fff" /><path d="M0 12h2L9 1" fill="none" stroke="#9aa0a8" /></svg>
            <SheetTab $w={106}>Example 4 Bar Charts</SheetTab>
            <svg width="10" height="13" viewBox="0 0 10 13"><path d="M1 12L9 1" stroke="#a8adb5" /></svg>
            <SheetTab $w={124}>Example 5 Pie Charts</SheetTab>
            <svg width="60" height="13" viewBox="0 0 60 13">
              <path d="M1 12L9 1M32 12L40 1" stroke="#b4b9c0" />
              <path d="M15 3h10v6l-2 2h-8z" fill="#f4f6fa" stroke="#6f7f9f" /><path d="M14 1l1 2 2 .5-2 1-1 2-1-2-2-1 2-.5z" fill="#f0a428" stroke="#d98d1c" />
            </svg>
            <HScroll>
              <SplitHandle />
              <ScrollButton aria-label="Scroll left"><Tri dir="left" s={9} c="#444" /></ScrollButton>
              <HTrack>
                <HThumb><svg width="8" height="6" viewBox="0 0 8 6"><path d="M.5 0v6M2.500 0v6M4.500 0v6M6.500 0v6" stroke="#8a9099" /></svg></HThumb>
              </HTrack>
              <ScrollButton aria-label="Scroll right"><Tri dir="right" s={9} c="#444" /></ScrollButton>
              <SplitHandle />
            </HScroll>
          </BottomBar>
          <StatusBar><span /></StatusBar>

          <FormatAxisDialog />
        </ExcelWindow>

        <Watermark width="110" height="100" viewBox="0 0 330 300">
          <rect x="68" y="72" width="188" height="176" fill="#140203" />
          <g fill="#735c59">
            <path d="M218 82C180 55 115 58 88 105C70 138 76 168 82 192C84 170 84 145 98 120C120 82 170 68 218 82Z" />
            <path d="M142 104C132 106 132 122 144 124C190 124 228 134 240 158C236 190 205 228 158 230C130 230 112 222 96 212C108 236 138 248 162 246C210 244 250 208 253 160C253 140 248 128 243 118L240 132C220 108 180 102 142 104Z" />
            <path d="M80 148C90 186 130 204 184 200C194 196 194 184 184 181C140 180 104 176 90 148Z" />
          </g>
        </Watermark>
      </Stage>
    </>
  );
}
